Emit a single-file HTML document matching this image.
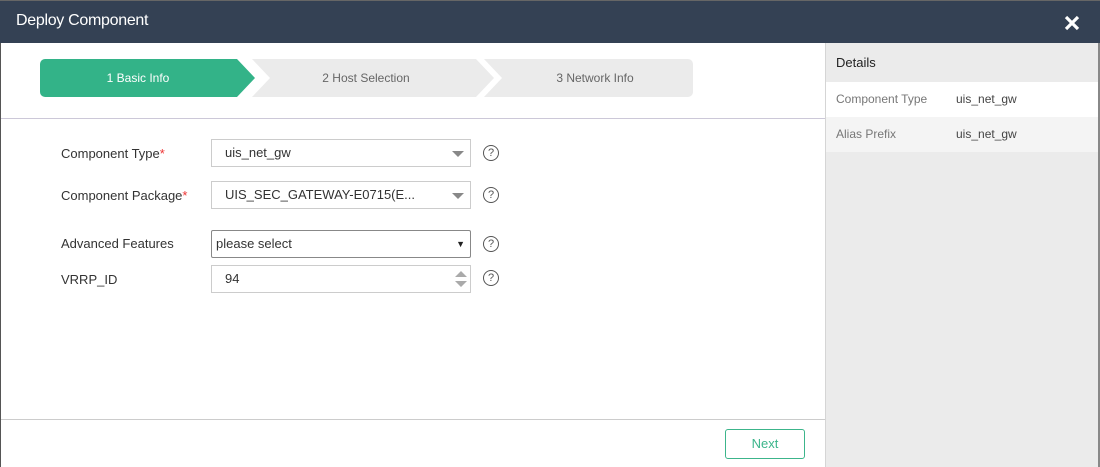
<!DOCTYPE html>
<html><head><style>
*{margin:0;padding:0;box-sizing:border-box}
body{width:1100px;height:467px;overflow:hidden;background:#fff;font-family:"Liberation Sans",sans-serif;position:relative}
.hdr{position:absolute;left:0;top:0;width:1100px;height:43px;background:#344154;border-top:1px solid #666}
.hdr .t{position:absolute;left:16px;top:11px;color:#fff;font-size:16px;letter-spacing:-0.3px}
.x{position:absolute;left:1063px;top:13px}
.lb{position:absolute;left:0;top:43px;width:1px;height:424px;background:#555}
.rb{position:absolute;left:1098px;top:43px;width:2px;height:424px;background:#888}
.side{position:absolute;left:825px;top:43px;width:273px;height:424px;background:#ebebeb;border-left:1px solid #d5d5d5}
.side .h{position:absolute;left:10px;top:12px;font-size:13px;color:#222}
.row{position:absolute;left:0;width:273px;height:35px;font-size:12px;color:#777;line-height:35px}
.row span{position:absolute;left:10px}.row b{position:absolute;left:130px;font-weight:normal;color:#444}
.hl{position:absolute;left:1px;top:118px;width:824px;height:1px;background:#ccc8d8}
.fl{position:absolute;left:1px;top:419px;width:824px;height:1px;background:#ccc}
.lbl{position:absolute;left:61px;font-size:13px;color:#333}
.lbl i{color:#e33;font-style:normal}
.sel{position:absolute;left:211px;width:260px;height:28px;border:1px solid #ccc;font-size:13px;color:#333;line-height:26px;padding-left:13px}
.tri{position:absolute;right:6px;top:11px;width:0;height:0;border-left:6px solid transparent;border-right:6px solid transparent;border-top:6px solid #888}
.q{position:absolute;left:483px;width:16px;height:16px;border:1.3px solid #555;border-radius:50%;font-size:11px;color:#555;text-align:center;line-height:14px}
.btn{position:absolute;left:725px;top:429px;width:80px;height:30px;border:1.5px solid #3cb58b;border-radius:3px;color:#3cb58b;font-size:13px;text-align:center;line-height:27px}
</style></head><body>
<div class="hdr"><div class="t">Deploy Component</div>
<svg class="x" width="18" height="18" viewBox="0 0 18 18"><path d="M3 3L15 15M15 3L3 15" stroke="#fff" stroke-width="3.2"/></svg></div>
<div class="lb"></div>
<svg style="position:absolute;left:40px;top:59px" width="654" height="39">
<path d="M444 0H648a5 5 0 0 1 5 5V33a5 5 0 0 1-5 5H444L462 19Z" fill="#ebebeb"/>
<path d="M212 0H436L454 19L436 38H212L230 19Z" fill="#ebebeb"/>
<path d="M5 0H197L215 19L197 38H5a5 5 0 0 1-5-5V5a5 5 0 0 1 5-5Z" fill="#33b388"/>
<text x="98" y="23" fill="#fff" font-size="12" text-anchor="middle" font-family="Liberation Sans">1 Basic Info</text>
<text x="326" y="23" fill="#666" font-size="12" text-anchor="middle" font-family="Liberation Sans">2 Host Selection</text>
<text x="555" y="23" fill="#666" font-size="12" text-anchor="middle" font-family="Liberation Sans">3 Network Info</text>
</svg>
<div class="hl"></div>
<div class="lbl" style="top:146px">Component Type<i>*</i></div>
<div class="sel" style="top:139px">uis_net_gw<div class="tri"></div></div>
<div class="q" style="top:145px">?</div>
<div class="lbl" style="top:188px">Component Package<i>*</i></div>
<div class="sel" style="top:181px">UIS_SEC_GATEWAY-E0715(E...<div class="tri"></div></div>
<div class="q" style="top:187px">?</div>
<div class="lbl" style="top:236px">Advanced Features</div>
<div class="sel" style="top:230px;border-color:#888;padding-left:4px;border-radius:2px">please select<span style="position:absolute;right:5px;top:0;font-size:9px;color:#222">▼</span></div>
<div class="q" style="top:236px">?</div>
<div class="lbl" style="top:272px">VRRP_ID</div>
<div class="sel" style="top:265px">94
<svg style="position:absolute;right:2px;top:3px" width="14" height="20"><path d="M1 8L7 2L13 8Z M1 12L7 18L13 12Z" fill="#aaa"/></svg></div>
<div class="q" style="top:270px">?</div>
<div class="fl"></div>
<div class="btn">Next</div>
<div class="side"><div class="h">Details</div>
<div class="row" style="top:39px;background:#fff"><span>Component Type</span><b>uis_net_gw</b></div>
<div class="row" style="top:74px;background:#f4f4f4"><span>Alias Prefix</span><b>uis_net_gw</b></div>
</div>
<div class="rb"></div>
</body></html>
